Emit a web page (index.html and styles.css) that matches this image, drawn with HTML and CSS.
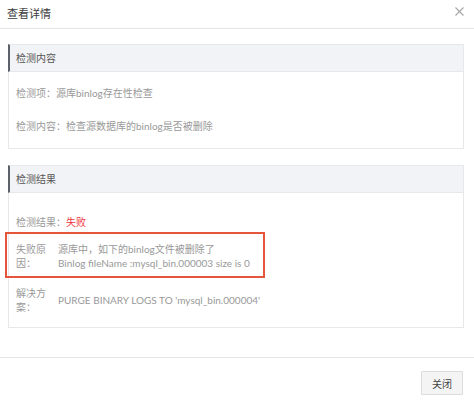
FILE: index.html
```html
<!DOCTYPE html>
<html lang="zh-CN">
<head>
<meta charset="utf-8">
<title>查看详情</title>
<link rel="stylesheet" href="styles.css">
</head>
<body>
<div class="dialog">
  <div class="dlg-header">
    <span class="dlg-title">查看详情</span>
    <span class="dlg-close" aria-label="关闭">
      <svg width="9" height="9" viewBox="0 0 9 9"><path d="M0.5 0.5L8.5 8.5M8.5 0.5L0.5 8.5" stroke="#a6a6a6" stroke-width="1.1" fill="none"/></svg>
    </span>
  </div>
  <div class="dlg-body">
    <div class="section">
      <div class="sec-head">检测内容</div>
      <div class="sec-body content">
        <div class="line">检测项：源库binlog存在性检查</div>
        <div class="line">检测内容：检查源数据库的binlog是否被删除</div>
      </div>
    </div>
    <div class="section">
      <div class="sec-head">检测结果</div>
      <div class="sec-body result">
        <div class="line">检测结果：<span class="fail">失败</span></div>
        <div class="row marked">
          <div class="label">失败原因：</div>
          <div class="value">源库中，如下的binlog文件被删除了<br>Binlog fileName :mysql_bin.000003 size is 0</div>
        </div>
        <div class="row">
          <div class="label">解决方案：</div>
          <div class="value">PURGE BINARY LOGS TO 'mysql_bin.000004'</div>
        </div>
      </div>
    </div>
  </div>
  <div class="dlg-footer">
    <button class="btn">关闭</button>
  </div>
</div>
</body>
</html>
```
FILE: styles.css
```css
html, body {
  margin: 0;
  padding: 0;
  background: #fff;
}
body {
  font-family: Lato, "Noto Sans CJK SC", sans-serif;
  font-size: 10px;
  color: #999;
}
.dialog {
  width: 474px;
  height: 404px;
  display: flex;
  flex-direction: column;
  background: #fff;
}
.dlg-header {
  height: 29px;
  box-sizing: border-box;
  border-bottom: 1px solid #e6e6e6;
  padding: 6px 10px 0 7px;
  display: flex;
  justify-content: space-between;
  align-items: flex-start;
}
.dlg-title {
  font-size: 11px;
  line-height: 15px;
  color: #3a3a3a;
}
.dlg-close {
  display: flex;
  margin-top: 1px;
}
.dlg-body {
  flex: 1;
  padding: 15px 10px 0 8px;
}
.section + .section {
  margin-top: 16px;
}
.sec-head {
  height: 28px;
  box-sizing: border-box;
  background: #f2f3f6;
  border: 1px solid #e6e8ec;
  border-left: 2px solid #5d6169;
  padding-left: 6px;
  line-height: 26px;
  color: #555;
}
.sec-body {
  border: 1px solid #e8e8e8;
  border-top: none;
  padding: 0 8px 0 7px;
}
.line {
  line-height: 14px;
}
.content {
  padding-top: 14px;
  padding-bottom: 15px;
}
.content .line + .line {
  margin-top: 19px;
}
.result {
  padding-top: 22px;
  padding-bottom: 13px;
}
.fail {
  color: #f0333a;
}
.row {
  display: flex;
  align-items: center;
  line-height: 14px;
  margin-top: 13px;
}
.row + .row {
  margin-top: 16px;
}
.label {
  width: 31px;
  margin-right: 11px;
  flex-shrink: 0;
}
.marked {
  position: relative;
}
.marked::after {
  content: "";
  position: absolute;
  left: -11px;
  top: -10px;
  width: 260px;
  height: 46px;
  box-sizing: border-box;
  border: 2px solid #e4553b;
}
.dlg-footer {
  height: 47px;
  box-sizing: border-box;
  border-top: 1px solid #e6e6e6;
  padding: 13px 11px 0 0;
  display: flex;
  justify-content: flex-end;
  align-items: flex-start;
}
.btn {
  width: 42px;
  height: 24px;
  background: #f4f4f4;
  border: 1px solid #dcdcdc;
  border-radius: 1px;
  font-family: Lato, "Noto Sans CJK SC", sans-serif;
  font-size: 10px;
  color: #444;
  padding: 0;
}
```
